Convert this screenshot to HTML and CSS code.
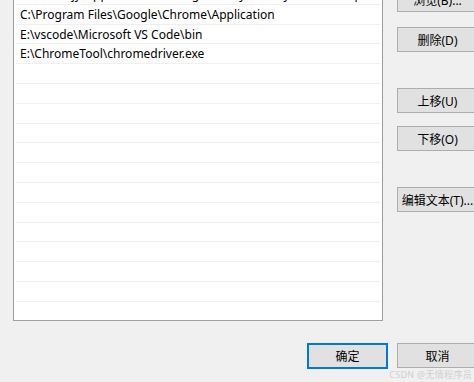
FILE: index.html
```html
<!DOCTYPE html>
<html lang="zh-CN">
<head>
    <meta charset="UTF-8">
    <meta name="viewport" content="width=device-width, initial-scale=1.0">
    <title>编辑环境变量</title>
    <link rel="stylesheet" href="styles.css">
</head>
<body>

    <div class="dialog">
        <div class="main">
            <div class="path-list">
                <div class="row">C:\Users\jy\AppData\Local\Programs\Python\Python39\Scripts\</div>
                <div class="row">C:\Program Files\Google\Chrome\Application</div>
                <div class="row">E:\vscode\Microsoft VS Code\bin</div>
                <div class="row">E:\ChromeTool\chromedriver.exe</div>
                <div class="row"></div>
                <div class="row"></div>
                <div class="row"></div>
                <div class="row"></div>
                <div class="row"></div>
                <div class="row"></div>
                <div class="row"></div>
                <div class="row"></div>
                <div class="row"></div>
                <div class="row"></div>
                <div class="row"></div>
                <div class="row"></div>
                <div class="row"></div>
            </div>

            <div class="side">
                <button class="btn">浏览(B)...</button>
                <button class="btn gap-sm">删除(D)</button>
                <button class="btn gap-lg">上移(U)</button>
                <button class="btn gap-sm">下移(O)</button>
                <button class="btn gap-lg">编辑文本(T)...</button>
            </div>
        </div>

        <div class="actions">
            <button class="btn default">确定</button>
            <button class="btn">取消</button>
        </div>
    </div>

    <div class="watermark">CSDN @无情程序员</div>

</body>
</html>
```

FILE: styles.css
```css
html, body {
    margin: 0;
    padding: 0;
}

body {
    width: 474px;
    height: 382px;
    overflow: hidden;
    background: #f0f0f0;
    font-family: "Noto Sans", "Noto Sans CJK SC", sans-serif;
    font-size: 12px;
    color: #000000;
    position: relative;
}

.dialog {
    width: 478px;
    padding-left: 13px;
    box-sizing: border-box;
}

.main {
    display: flex;
    gap: 14px;
    margin-top: -16px;
}

.path-list {
    width: 370px;
    height: 337px;
    box-sizing: border-box;
    border: 1px solid #a0a0a0;
    background: #ffffff;
    padding: 0 2px;
    overflow: hidden;
}

.row {
    height: 19.8px;
    line-height: 19px;
    box-sizing: border-box;
    padding-left: 4px;
    border-bottom: 1px solid #f0f0f0;
    white-space: nowrap;
    overflow: hidden;
}

.side {
    display: flex;
    flex-direction: column;
    padding-top: 3px;
}

.btn {
    width: 81px;
    height: 25px;
    padding: 0;
    border: 1px solid #adadad;
    background: #e1e1e1;
    font-family: "Noto Sans", "Noto Sans CJK SC", sans-serif;
    font-size: 12px;
    color: #000000;
    white-space: nowrap;
}

.gap-sm {
    margin-top: 15px;
}

.gap-lg {
    margin-top: 36px;
}

.side .gap-sm + .gap-lg {
    margin-top: 36px;
}

.side .gap-lg + .gap-sm {
    margin-top: 13px;
}

.actions {
    display: flex;
    justify-content: flex-end;
    gap: 9px;
    margin-top: 22px;
}

.btn.default {
    height: 26px;
    border: 2px solid #0078d7;
}

.watermark {
    position: absolute;
    right: 2px;
    bottom: 1px;
    font-size: 9px;
    color: #cfcfcf;
    letter-spacing: 0.3px;
}
```
